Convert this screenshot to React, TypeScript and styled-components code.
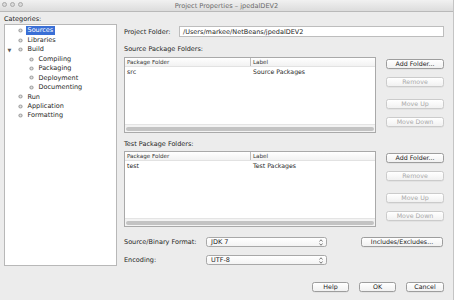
import React from 'react';
import styled, { createGlobalStyle } from 'styled-components';

const GlobalStyle = createGlobalStyle`
  html, body {
    margin: 0;
    padding: 0;
    background: #ececec;
  }
  body {
    font-family: "DejaVu Sans", "Liberation Sans", sans-serif;
    font-size: 6.5px;
    color: #1e1e1e;
  }
`;

//창 전체
const Window = styled.div`
  width: 454px;
  height: 300px;
  background: #ececec;
  box-sizing: border-box;
  border-right: 1px solid #c4c4c4;
  display: flex;
  flex-direction: column;
  overflow: hidden;
`;

const TitleBar = styled.div`
  height: 11px;
  flex: none;
  position: relative;
  display: flex;
  align-items: center;
  justify-content: center;
  background: linear-gradient(#f1f1f1, #dcdcdc);
  border-bottom: 1px solid #b9b9b9;
  color: #6a6a6a;
  font-size: 6.6px;
`;

const Lights = styled.div`
  position: absolute;
  left: 2px;
  top: 2px;
  display: flex;
  gap: 3px;
`;

const Light = styled.span`
  width: 5px;
  height: 5px;
  border-radius: 50%;
  background: #dadada;
  border: 0.8px solid #a9a9a9;
  box-sizing: border-box;
  display: block;
`;

const Main = styled.div`
  display: flex;
  padding: 3px 9px 0 4px;
`;

//카테고리 트리
const LeftCol = styled.div`
  width: 113px;
  flex: none;
  display: flex;
  flex-direction: column;
`;

const Caption = styled.div`
  height: 9px;
  line-height: 9px;
  color: #222;
`;

const TreeBox = styled.div`
  height: 242px;
  box-sizing: border-box;
  background: #fff;
  border: 1px solid #b8b8b8;
  padding-top: 1px;
`;

const TreeRow = styled.div<{ $level: number }>`
  height: 9.45px;
  display: flex;
  align-items: center;
  padding-left: ${({ $level }) => $level * 11}px;
`;

const Expander = styled.span`
  width: 9px;
  display: flex;
  justify-content: center;
  color: #5a5a5a;
  font-size: 5px;
`;

const Bullet = styled.svg`
  width: 5px;
  height: 5px;
  margin: 0 3px 0 4px;
  flex: none;
`;

const NodeLabel = styled.span<{ $selected?: boolean }>`
  padding: 0 1.5px;
  height: 8.5px;
  line-height: 8.5px;
  background: ${({ $selected }) => ($selected ? '#3a6fd6' : 'transparent')};
  color: ${({ $selected }) => ($selected ? '#fff' : '#1e1e1e')};
`;

//오른쪽 설정 영역
const RightCol = styled.div`
  flex: 1;
  margin-left: 7px;
  padding-top: 11px;
  display: flex;
  flex-direction: column;
`;

const FieldRow = styled.div<{ $top?: number }>`
  display: flex;
  align-items: center;
  margin-top: ${({ $top }) => $top ?? 0}px;
`;

const FieldLabel = styled.span<{ $width: number }>`
  width: ${({ $width }) => $width}px;
  flex: none;
`;

const TextInput = styled.div`
  flex: 1;
  height: 11px;
  box-sizing: border-box;
  background: #fff;
  border: 1px solid #bdbdbd;
  display: flex;
  align-items: center;
  padding-left: 3px;
`;

const SectionLabel = styled.div<{ $top: number }>`
  margin-top: ${({ $top }) => $top}px;
  height: 9px;
  line-height: 9px;
`;

const TableRow = styled.div<{ $top: number }>`
  margin-top: ${({ $top }) => $top}px;
  display: flex;
  gap: 10px;
`;

const Table = styled.div`
  width: 252px;
  height: 76px;
  box-sizing: border-box;
  background: #fff;
  border: 1px solid #a9a9a9;
  display: flex;
  flex-direction: column;
`;

const HeadRow = styled.div`
  display: flex;
  height: 8px;
  line-height: 8px;
  font-size: 5.6px;
  color: #333;
  background: linear-gradient(#fff, #f2f2f2);
  border-bottom: 1px solid #e2e2e2;
`;

const Cell = styled.span<{ $first?: boolean }>`
  box-sizing: border-box;
  padding-left: 2px;
  width: ${({ $first }) => ($first ? '126px' : 'auto')};
  flex: ${({ $first }) => ($first ? 'none' : '1')};
  border-right: ${({ $first }) => ($first ? '1px solid #bdbdbd' : 'none')};
`;

const BodyRow = styled.div`
  display: flex;
  height: 9px;
  line-height: 9px;
  font-size: 6.2px;
`;

const Filler = styled.div`
  flex: 1;
`;

const ScrollTrack = styled.div`
  height: 7px;
  background: #f3f3f3;
  border-top: 1px solid #e4e4e4;
  display: flex;
  align-items: center;
  padding: 0 1px;
`;

const ScrollThumb = styled.div`
  flex: 1;
  height: 4px;
  border-radius: 2px;
  background: #c3c3c3;
`;

const ButtonCol = styled.div`
  width: 58px;
  display: flex;
  flex-direction: column;
  padding-top: 2px;
`;

const Button = styled.button<{ $disabled?: boolean; $top?: number; $width?: number }>`
  margin: ${({ $top }) => $top ?? 0}px 0 0 0;
  width: ${({ $width }) => ($width ? `${$width}px` : '100%')};
  height: 10px;
  padding: 0;
  font-family: inherit;
  font-size: 6.3px;
  line-height: 8px;
  border-radius: 2.5px;
  box-sizing: border-box;
  background: linear-gradient(#ffffff, #f1f1f1);
  border: 1px solid ${({ $disabled }) => ($disabled ? '#cbcbcb' : '#9d9d9d')};
  color: ${({ $disabled }) => ($disabled ? '#a9a9a9' : '#1a1a1a')};
  box-shadow: 0 0.5px 0 rgba(0, 0, 0, 0.08);
`;

const Select = styled.div`
  width: 121px;
  height: 10px;
  box-sizing: border-box;
  border: 1px solid #a8a8a8;
  border-radius: 2.5px;
  background: linear-gradient(#ffffff, #f3f3f3);
  display: flex;
  align-items: center;
  justify-content: space-between;
  padding: 0 3px 0 4px;
`;

const Spacer = styled.div`
  flex: 1;
`;

const Footer = styled.div`
  display: flex;
  justify-content: flex-end;
  padding: 16px 9px 0 0;
  gap: 10px;
`;

const tree = [
  { label: 'Sources', level: 0, selected: true },
  { label: 'Libraries', level: 0 },
  { label: 'Build', level: 0, open: true },
  { label: 'Compiling', level: 1 },
  { label: 'Packaging', level: 1 },
  { label: 'Deployment', level: 1 },
  { label: 'Documenting', level: 1 },
  { label: 'Run', level: 0 },
  { label: 'Application', level: 0 },
  { label: 'Formatting', level: 0 },
];

const NodeIcon = () => (
  <Bullet viewBox="0 0 10 10">
    <circle cx="5" cy="5" r="4.2" fill="#a5a5a5" />
    <circle cx="5" cy="5" r="2" fill="#e4e4e4" />
  </Bullet>
);

const UpDown = () => (
  <svg width="4" height="7" viewBox="0 0 8 14">
    <path d="M1 5 L4 1.5 L7 5" fill="none" stroke="#444" strokeWidth="1.4" />
    <path d="M1 9 L4 12.5 L7 9" fill="none" stroke="#444" strokeWidth="1.4" />
  </svg>
);

const FolderTable = ({ folder, label }: { folder: string; label: string }) => (
  <Table>
    <HeadRow>
      <Cell $first>Package Folder</Cell>
      <Cell>Label</Cell>
    </HeadRow>
    <BodyRow>
      <Cell $first style={{ borderRight: 'none' }}>{folder}</Cell>
      <Cell>{label}</Cell>
    </BodyRow>
    <Filler />
    <ScrollTrack>
      <ScrollThumb />
    </ScrollTrack>
  </Table>
);

const FolderButtons = () => (
  <ButtonCol>
    <Button>Add Folder...</Button>
    <Button $disabled $top={8}>Remove</Button>
    <Button $disabled $top={12}>Move Up</Button>
    <Button $disabled $top={8}>Move Down</Button>
  </ButtonCol>
);

export default function App() {
  return (
    <>
      <GlobalStyle />
      <Window>
        <TitleBar>
          <Lights>
            <Light />
            <Light />
            <Light />
          </Lights>
          Project Properties – jpedalDEV2
        </TitleBar>
        <Main>
          <LeftCol>
            <Caption>Categories:</Caption>
            <TreeBox>
              {tree.map((n) => (
                <TreeRow key={n.label} $level={n.level}>
                  <Expander>{n.open ? '▼' : ''}</Expander>
                  <NodeIcon />
                  <NodeLabel $selected={n.selected}>{n.label}</NodeLabel>
                </TreeRow>
              ))}
            </TreeBox>
          </LeftCol>
          <RightCol>
            <FieldRow>
              <FieldLabel $width={55}>Project Folder:</FieldLabel>
              <TextInput>/Users/markee/NetBeans/jpedalDEV2</TextInput>
            </FieldRow>
            <SectionLabel $top={8}>Source Package Folders:</SectionLabel>
            <TableRow $top={3}>
              <FolderTable folder="src" label="Source Packages" />
              <FolderButtons />
            </TableRow>
            <SectionLabel $top={7}>Test Package Folders:</SectionLabel>
            <TableRow $top={2}>
              <FolderTable folder="test" label="Test Packages" />
              <FolderButtons />
            </TableRow>
            <FieldRow $top={10}>
              <FieldLabel $width={82}>Source/Binary Format:</FieldLabel>
              <Select>
                <span>JDK 7</span>
                <UpDown />
              </Select>
              <Spacer />
              <Button $width={82} style={{ marginRight: 1 }}>Includes/Excludes...</Button>
            </FieldRow>
            <FieldRow $top={8}>
              <FieldLabel $width={82}>Encoding:</FieldLabel>
              <Select>
                <span>UTF-8</span>
                <UpDown />
              </Select>
            </FieldRow>
          </RightCol>
        </Main>
        <Footer>
          <Button $width={37}>Help</Button>
          <Button $width={37}>OK</Button>
          <Button $width={38}>Cancel</Button>
        </Footer>
      </Window>
    </>
  );
}
